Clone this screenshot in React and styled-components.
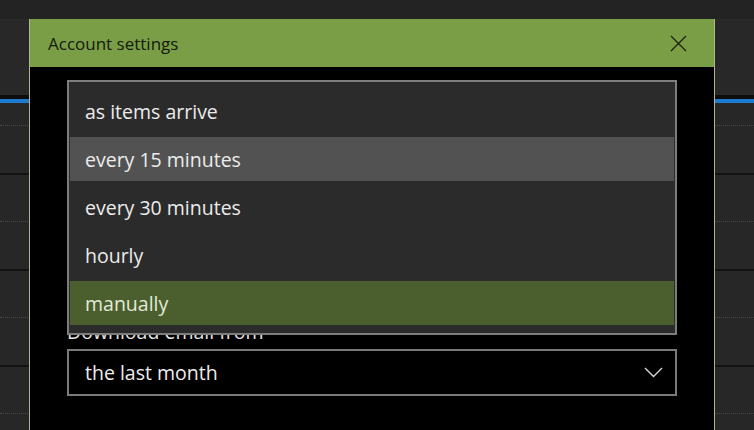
import styled, { createGlobalStyle } from 'styled-components'

const GlobalStyle = createGlobalStyle`
  html, body {
    margin: 0;
    padding: 0;
    background: #232323;
    overflow: hidden;
  }
  body {
    font-family: "Open Sans", "Noto Sans", "Liberation Sans", sans-serif;
  }
`

const Screen = styled.div`
  position: relative;
  width: 754px;
  height: 430px;
  overflow: hidden;
  background: #262626;
`

// app behind the dialog
const Backdrop = styled.div`
  display: flex;
  flex-direction: column;
  height: 100%;
`

const Header = styled.div`
  height: 95px;
  background: linear-gradient(#232323 0 19px, #282828 19px);
  border-bottom: 4px solid #0d0d0d;
`

const AccentLine = styled.div`
  height: 4px;
  background: #1f7bd0;
`

const ListViewport = styled.div`
  flex: 1;
  overflow: hidden;
`

const List = styled.div`
  margin-top: -24px;
`

const Row = styled.div`
  height: 94px;
  border-bottom: 2px solid #121212;
  background: #272727;
`

const RowHalf = styled.div`
  height: 46px;
  border-bottom: 1px dotted #4a4a4a;
`

const Dialog = styled.div`
  position: absolute;
  left: 29px;
  top: 19px;
  width: 684px;
  bottom: -40px;
  background: #000;
  border-left: 1px solid #b3b38e;
  border-right: 1px solid #b3b38e;
  display: flex;
  flex-direction: column;
`

const TitleBar = styled.div`
  height: 48px;
  flex-shrink: 0;
  background: #799e46;
  display: flex;
  align-items: center;
  justify-content: space-between;
  padding: 0 27px 0 18px;
`

const Title = styled.div`
  font-size: 17px;
  color: #15190f;
`

const CloseButton = styled.button`
  width: 18px;
  height: 18px;
  padding: 0;
  border: none;
  background: none;
  display: flex;
  align-items: center;
  justify-content: center;
  cursor: pointer;
`

const Body = styled.div`
  flex: 1;
  padding: 13px 37px 0;
  display: flex;
  flex-direction: column;
`

const Field = styled.div`
  display: flex;
  flex-direction: column;
  margin-top: -15px;
`

const Label = styled.div`
  font-size: 19.5px;
  line-height: 24px;
  color: #e6e6e6;
  margin-bottom: 5px;
`

const Select = styled.div`
  height: 43px;
  border: 2px solid #7a7a7a;
  background: #000;
  display: flex;
  align-items: center;
  justify-content: space-between;
  padding: 0 12px 0 16px;
  font-size: 19.5px;
  color: #ededed;
`

// open dropdown list, drawn over the field below it
const Popup = styled.ul`
  position: relative;
  z-index: 1;
  margin: 0;
  list-style: none;
  padding: 7px 1px 8px;
  display: flex;
  flex-direction: column;
  gap: 4px;
  background: #2b2b2b;
  border: 2px solid #7d7d7d;
`

const Option = styled.li`
  height: 44px;
  display: flex;
  align-items: center;
  padding-left: 15px;
  font-size: 19.5px;
  color: ${p => (p.$selected ? '#e2ead6' : '#ececec')};
  background: ${p => (p.$selected ? '#4b5f2e' : p.$hover ? '#525252' : 'transparent')};
`

const options = ['as items arrive', 'every 15 minutes', 'every 30 minutes', 'hourly', 'manually']

const App = () => {
  return (
    <Screen>
      <GlobalStyle />
      <Backdrop>
        <Header />
        <AccentLine />
        <ListViewport>
          <List>
            {[0, 1, 2, 3].map(i => (
              <Row key={i}>
                <RowHalf />
              </Row>
            ))}
          </List>
        </ListViewport>
      </Backdrop>

      <Dialog>
        <TitleBar>
          <Title>Account settings</Title>
          <CloseButton aria-label="Close">
            <svg width="17" height="17" viewBox="0 0 17 17">
              <path d="M1 1L16 16M16 1L1 16" stroke="#17200c" strokeWidth="1.2" fill="none" />
            </svg>
          </CloseButton>
        </TitleBar>

        <Body>
          <Popup>
            {options.map((o, i) => (
              <Option key={o} $hover={i === 1} $selected={i === 4}>
                {o}
              </Option>
            ))}
          </Popup>

          <Field>
            <Label>Download email from</Label>
            <Select>
              the last month
              <svg width="19" height="11" viewBox="0 0 19 11">
                <path d="M1 1L9.5 9.5L18 1" stroke="#d6d6d6" strokeWidth="1.4" fill="none" />
              </svg>
            </Select>
          </Field>
        </Body>
      </Dialog>
    </Screen>
  )
}

export default App
